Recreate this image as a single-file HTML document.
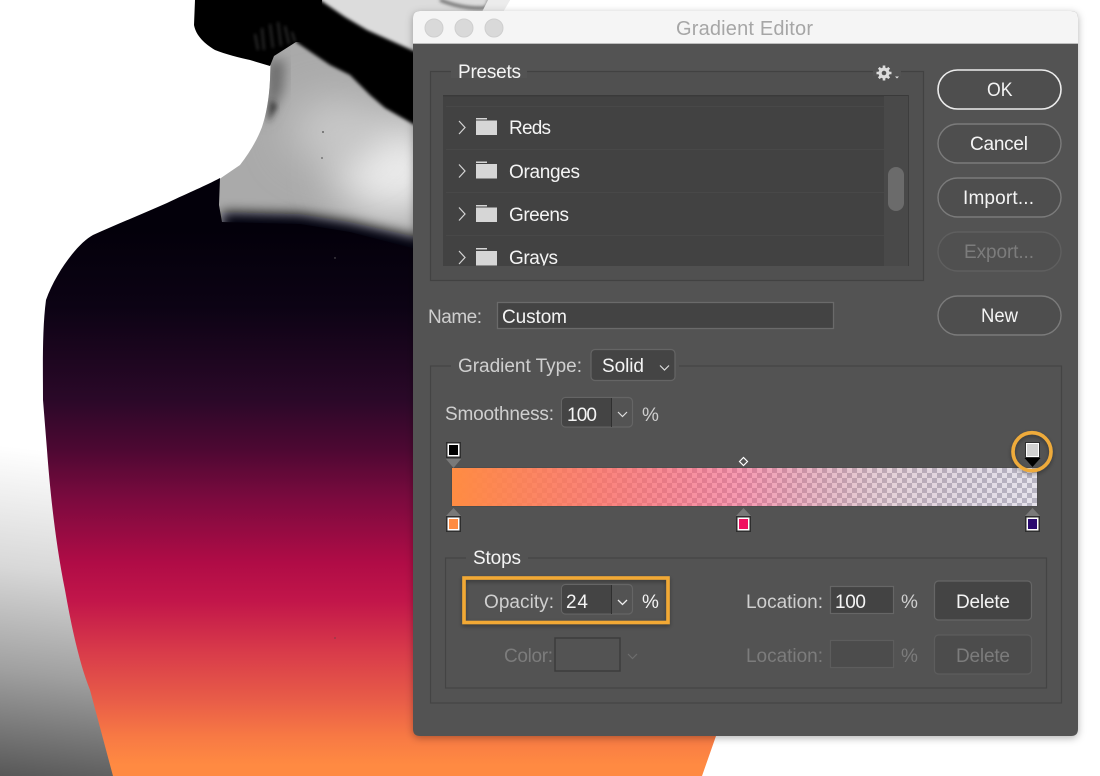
<!DOCTYPE html>
<html><head><meta charset="utf-8"><title>Gradient Editor</title>
<style>html,body{margin:0;padding:0;background:#fff;width:1100px;height:776px;overflow:hidden}svg{display:block}
text{font-family:"Liberation Sans",sans-serif;font-size:19px;fill:#e4e4e4}
.w{fill:#f4f4f4}.m{fill:#cfcfcf}.d{fill:#7c7c7c}</style></head><body>
<svg width="1100" height="776" viewBox="0 0 1100 776" xmlns="http://www.w3.org/2000/svg">
<defs>
<linearGradient id="bg" gradientUnits="userSpaceOnUse" x1="40" y1="450" x2="0" y2="790"><stop offset="0" stop-color="#fff"/><stop offset=".35" stop-color="#d8d8d8"/><stop offset=".65" stop-color="#a0a0a0"/><stop offset="1" stop-color="#4e4e4e"/></linearGradient>
<linearGradient id="body" gradientUnits="userSpaceOnUse" x1="0" y1="230" x2="0" y2="776"><stop offset="0" stop-color="#03000a"/><stop offset=".14" stop-color="#0c0314"/><stop offset=".31" stop-color="#2a0828"/><stop offset=".4" stop-color="#4c0832"/><stop offset=".49" stop-color="#7a0a3e"/><stop offset=".61" stop-color="#b00c46"/><stop offset=".68" stop-color="#c2164a"/><stop offset=".77" stop-color="#d83a4a"/><stop offset=".86" stop-color="#e85c48"/><stop offset=".93" stop-color="#f87a44"/><stop offset=".98" stop-color="#ff8a42"/></linearGradient>
<linearGradient id="grad" gradientUnits="userSpaceOnUse" x1="452" y1="0" x2="1037" y2="0"><stop offset="0" stop-color="#ff8c42"/><stop offset=".25" stop-color="#fb6a5e" stop-opacity=".82"/><stop offset=".5" stop-color="#f5406e" stop-opacity=".5"/><stop offset=".75" stop-color="#a8506e" stop-opacity=".22"/><stop offset="1" stop-color="#2a0a6e" stop-opacity=".08"/></linearGradient>
<pattern id="chk" patternUnits="userSpaceOnUse" x="452" y="468" width="10" height="10"><rect width="10" height="10" fill="#f6f6f6"/><rect width="5" height="5" fill="#c4c4ca"/><rect x="5" y="5" width="5" height="5" fill="#c4c4ca"/></pattern>
<filter id="b2" x="-30%" y="-30%" width="160%" height="160%"><feGaussianBlur stdDeviation="1.500"/></filter>
<filter id="b3" x="-30%" y="-30%" width="160%" height="160%"><feGaussianBlur stdDeviation="3"/></filter>
<filter id="b5" x="-30%" y="-60%" width="160%" height="220%"><feGaussianBlur stdDeviation="6"/></filter>
<filter id="b12" x="-100%" y="-100%" width="300%" height="300%"><feGaussianBlur stdDeviation="22"/></filter>
<filter id="ds" x="-5%" y="-5%" width="110%" height="110%"><feDropShadow dx="0" dy="2" stdDeviation="4" flood-color="#000" flood-opacity=".3"/></filter>
<filter id="ds2" x="-20%" y="-30%" width="140%" height="160%"><feDropShadow dx="0" dy="2" stdDeviation="2" flood-color="#000" flood-opacity=".35"/></filter>
<clipPath id="neck"><path d="M271 50L270 80C269 100 266 115 262 127C257 140 250 152 240 165L218 180L218 260L430 260L430 0L271 0Z"/></clipPath>
<clipPath id="list"><rect x="443" y="95" width="466" height="170.500"/></clipPath>
</defs>
<rect width="1100" height="776" fill="#fff"/>
<rect x="0" y="440" width="200" height="336" fill="url(#bg)"/>

<!-- neck -->
<g clip-path="url(#neck)">
<rect x="210" y="0" width="220" height="260" fill="#aaaaaa"/>
<ellipse cx="395" cy="170" rx="60" ry="45" fill="#ececec" filter="url(#b12)"/>
<ellipse cx="335" cy="130" rx="45" ry="30" fill="#cacaca" filter="url(#b12)"/>
<path d="M268 60L285 60L283 90L266 125Z" fill="#6a6a6a" filter="url(#b5)"/>
<path d="M271 100L277 106L268 122Z" fill="#333" filter="url(#b3)"/>
</g>
<circle cx="323" cy="132" r="1" fill="#666"/><circle cx="322" cy="158" r="1" fill="#777"/>

<!-- face -->
<path d="M310 0L510 0L503 12L425 12L425 70L370 40Z" fill="#dcdcdc"/>
<path d="M440 0Q462 9 484 8Q491 4 488 0" fill="none" stroke="#666" stroke-width="3" filter="url(#b2)"/>
<path d="M488 0L510 0L503 12L482 12Z" fill="#ececec"/>

<!-- hair & jaw shadow -->
<path d="M320 0L345 17L367 30L425 56L425 130L413 124L385 108L370 95L350 75L330 65L296 42L300 0Z" fill="#000" filter="url(#b2)"/>
<path d="M195 0L194 25C196 36 205 44 215 50C225 54 240 58 250 60L270 66L274 56L296 42L320 42L322 0Z" fill="#000"/>
<g stroke="#8a8a8a" stroke-width="1" opacity=".7" filter="url(#b2)"><path d="M255 34L258 50M262 28L264 50M270 24L273 48M278 22L281 46M285 26L289 44M292 32L295 42"/></g>

<!-- body -->
<path d="M222 212L300 214L350 222L430 240L430 262L222 240Z" fill="#050009" filter="url(#b5)"/>
<path d="M220 178C205 186 190 192 167 203C140 215 115 225 93 235C78 243 56 272 46 300C42 330 43 370 43 400L47 450C50 490 55 540 65 590C72 630 80 665 90 690L113 776L702 776L716 736L800 736L800 250L420 250L350 232L300 224L222 222L219 205Z" fill="url(#body)"/>
<circle cx="335" cy="258" r=".7" fill="#666"/><circle cx="335" cy="638" r=".6" fill="#444"/>

<!-- dialog -->
<g filter="url(#ds)">
<path d="M420 11H1071Q1078 11 1078 18V729Q1078 736 1071 736H420Q413 736 413 729V18Q413 11 420 11Z" fill="#535353"/>
</g>
<path d="M420 11H1071Q1078 11 1078 18V43H413V18Q413 11 420 11Z" fill="#f5f5f5"/>
<rect x="413" y="43" width="665" height="1" fill="#bdbdbd"/>
<circle cx="434" cy="28" r="9" fill="#d9d9d9" stroke="#cfcfcf"/><circle cx="464" cy="28" r="9" fill="#d9d9d9" stroke="#cfcfcf"/><circle cx="494" cy="28" r="9" fill="#d9d9d9" stroke="#cfcfcf"/>
<text x="676" y="35" textLength="137" style="font-size:20px;fill:#a6a6a6">Gradient Editor</text>

<!-- presets -->
<rect x="430.500" y="71.500" width="493" height="209" fill="#505050" stroke="#424242" stroke-width="1.2"/>
<rect x="451" y="66" width="76" height="12" fill="#535353"/>
<rect x="873" y="66" width="28" height="10" fill="#535353"/>
<text x="458" y="78" textLength="63" class="w">Presets</text>
<g fill="#dcdcdc"><circle cx="884" cy="73" r="5.500"/><g stroke="#dcdcdc" stroke-width="2.600"><path d="M884 65.500V80.500M876.500 73H891.500M878.800 67.800L889.200 78.200M889.200 67.800L878.800 78.200"/></g></g><circle cx="884" cy="73" r="2.300" fill="#535353"/>
<path d="M895 76.500H899L897 78.500Z" fill="#ddd"/>
<rect x="443" y="95" width="466" height="171" fill="#424242"/>
<rect x="443" y="95" width="466" height="1.500" fill="#3a3a3a"/>
<rect x="884" y="96" width="24" height="170" fill="#494949"/>
<rect x="908" y="95" width="1" height="171" fill="#3d3d3d"/>
<rect x="888" y="167" width="16" height="44" rx="8" fill="#6b6b6b"/>
<g fill="#484848"><rect x="446" y="106" width="438" height="1"/><rect x="446" y="149" width="438" height="1"/><rect x="446" y="192" width="438" height="1"/><rect x="446" y="235" width="438" height="1"/></g>
<g clip-path="url(#list)">
<g fill="none" stroke="#d4d4d4" stroke-width="1.2"><path d="M459 121L465 127.500L459 134"/><path d="M459 164.500L465 171L459 177.500"/><path d="M459 207.500L465 214L459 220.500"/><path d="M459 251L465 257.500L459 264"/></g>
<g fill="#d6d6d6"><path d="M476 118H487V119.500H476ZM476 120.500H497V135H476Z"/><path d="M476 161.500H487V163H476ZM476 164H497V178.500H476Z"/><path d="M476 205H487V206.500H476ZM476 207.500H497V222H476Z"/><path d="M476 248H487V249.500H476ZM476 251H497V265.500H476Z"/></g>
<text x="509" y="134" textLength="42" class="w">Reds</text>
<text x="509" y="178" textLength="71" class="w">Oranges</text>
<text x="509" y="221" textLength="60" class="w">Greens</text>
<text x="509" y="264" textLength="49" class="w">Grays</text>
</g>

<!-- right buttons -->
<g fill="#4e4e4e" stroke="#7b7b7b" stroke-width="1.4">
<rect x="938" y="70" width="123" height="39" rx="19.500" stroke="#ececec" stroke-width="1.600"/>
<rect x="938" y="124" width="123" height="39" rx="19.500"/>
<rect x="938" y="178" width="123" height="39" rx="19.500"/>
<rect x="938" y="232" width="123" height="39" rx="19.500" stroke="#5f5f5f" fill="#505050"/>
<rect x="938" y="296" width="123" height="39" rx="19.500"/>
</g>
<text x="987" y="96" textLength="25.500" lengthAdjust="spacingAndGlyphs" class="w">OK</text>
<text x="970" y="150" textLength="58" class="w">Cancel</text>
<text x="963" y="204" textLength="71" class="w">Import...</text>
<text x="964" y="258" textLength="70" class="d">Export...</text>
<text x="981" y="322" textLength="37" lengthAdjust="spacingAndGlyphs" class="w">New</text>

<!-- name -->
<text x="428" y="323" textLength="54" class="m">Name:</text>
<rect x="497.500" y="302.500" width="336" height="26" fill="#434343" stroke="#6a6a6a" stroke-width="1.3"/>
<text x="502" y="323" textLength="65" class="w">Custom</text>

<!-- gradient type group -->
<rect x="430.500" y="366" width="631" height="337" fill="#535353" stroke="#444" stroke-width="1.2"/>
<rect x="451" y="345" width="228" height="30" fill="#535353"/>
<text x="458" y="372" textLength="124" class="m">Gradient Type:</text>
<rect x="591" y="349.500" width="84" height="31" rx="4" fill="#444" stroke="#656565" stroke-width="1.2"/>
<text x="602" y="372" textLength="42" class="w">Solid</text>
<path d="M660 365.500L664.500 370L669 365.500" fill="none" stroke="#ddd" stroke-width="1.2"/>

<text x="445" y="420" textLength="109" class="m">Smoothness:</text>
<rect x="561.500" y="397.500" width="71" height="29.500" rx="4" fill="#535353" stroke="#656565" stroke-width="1.2"/>
<path d="M566 398H611V426.500H566Q562 426.500 562 422.500V402Q562 398 566 398Z" fill="#444"/>
<rect x="611" y="398" width="1" height="29" fill="#2f2f2f"/>
<text x="567" y="421" textLength="30" class="w">100</text>
<path d="M618 412L622.500 416.500L627 412" fill="none" stroke="#ddd" stroke-width="1.2"/>
<text x="642" y="421" textLength="15" class="m">%</text>

<!-- gradient bar -->
<rect x="451.500" y="467.500" width="586" height="39" fill="#474747"/>
<rect x="452" y="468" width="585" height="38" fill="url(#chk)"/>
<rect x="452" y="468" width="585" height="38" fill="url(#grad)"/>

<path d="M446 459H461L453.500 468Z" fill="#797979"/>
<rect x="446" y="442" width="15" height="16" fill="#2e2e2e"/><rect x="447.500" y="443.500" width="12" height="13" fill="#fff"/><rect x="449" y="445" width="9" height="10" fill="#000"/>
<path d="M739.500 461.500L743.500 457.500L747.500 461.500L743.500 465.500Z" fill="#535353" stroke="#fff" stroke-width="1.2"/>
<rect x="1025" y="442" width="15" height="16" fill="#2e2e2e"/><rect x="1026" y="443" width="13" height="14" fill="#fff"/><rect x="1027" y="444" width="11" height="12" fill="#d2d2d2"/>
<path d="M1024.500 458H1040.500L1032.500 467Z" fill="#000"/>
<circle cx="1032" cy="451.700" r="19" fill="none" stroke="#efab3a" stroke-width="3.600" filter="url(#ds2)"/>

<path d="M453.500 508L461 516H446Z" fill="#797979"/><path d="M743.500 508L751 516H736Z" fill="#797979"/><path d="M1032.500 508L1040 516H1025Z" fill="#797979"/>
<g fill="#2e2e2e"><rect x="446" y="516" width="15" height="16"/><rect x="736" y="516" width="15" height="16"/><rect x="1025" y="516" width="15" height="16"/></g>
<g fill="#fff"><rect x="447.500" y="517.500" width="12" height="13"/><rect x="737.500" y="517.500" width="12" height="13"/><rect x="1026.500" y="517.500" width="12" height="13"/></g>
<rect x="449" y="519" width="9" height="10" fill="#ff8c42"/><rect x="739" y="519" width="9" height="10" fill="#f01060"/><rect x="1028" y="519" width="9" height="10" fill="#2a0a6e"/>

<!-- stops -->
<rect x="445.500" y="558" width="601" height="130" fill="#535353" stroke="#444" stroke-width="1.2"/>
<rect x="466" y="552" width="62" height="12" fill="#535353"/>
<text x="473" y="564" textLength="48" class="w">Stops</text>

<rect x="464" y="578" width="204" height="44.500" fill="none" stroke="#f2a935" stroke-width="3.600" filter="url(#ds2)"/>
<text x="484" y="608" textLength="70" class="m">Opacity:</text>
<rect x="561.500" y="584.500" width="71" height="29.500" rx="4" fill="#535353" stroke="#656565" stroke-width="1.2"/>
<path d="M566 585H611V613.500H566Q562 613.500 562 609.500V589Q562 585 566 585Z" fill="#444"/>
<rect x="611" y="585" width="1" height="29" fill="#2f2f2f"/>
<text x="566" y="608" textLength="22" class="w">24</text>
<path d="M618 600L622.500 604.500L627 600" fill="none" stroke="#eee" stroke-width="1.300"/>
<text x="642" y="608" textLength="15" class="w">%</text>

<text x="746" y="608" textLength="77" class="m">Location:</text>
<rect x="830.500" y="586.500" width="63" height="27" fill="#434343" stroke="#666" stroke-width="1.2"/>
<text x="835" y="608" textLength="31" class="w">100</text>
<text x="901" y="608" textLength="15" class="m">%</text>
<rect x="934.500" y="581" width="97" height="39" rx="4" fill="#444" stroke="#666" stroke-width="1.2"/>
<text x="956" y="608" textLength="54" class="w">Delete</text>

<text x="504" y="662" textLength="49" class="d">Color:</text>
<rect x="555" y="638" width="65" height="33" fill="#535353" stroke="#3b3b3b" stroke-width="1.4"/>
<path d="M628 654L632.500 658.500L637 654" fill="none" stroke="#6d6d6d" stroke-width="1.200"/>
<text x="746" y="662" textLength="77" class="d">Location:</text>
<rect x="830.500" y="640.500" width="63" height="27" fill="#4c4c4c" stroke="#5d5d5d" stroke-width="1.2"/>
<text x="901" y="662" textLength="15" class="d">%</text>
<rect x="934.500" y="635" width="97" height="39" rx="4" fill="#4c4c4c" stroke="#5d5d5d" stroke-width="1.2"/>
<text x="956" y="662" textLength="54" class="d">Delete</text>
</svg>
</body></html>
